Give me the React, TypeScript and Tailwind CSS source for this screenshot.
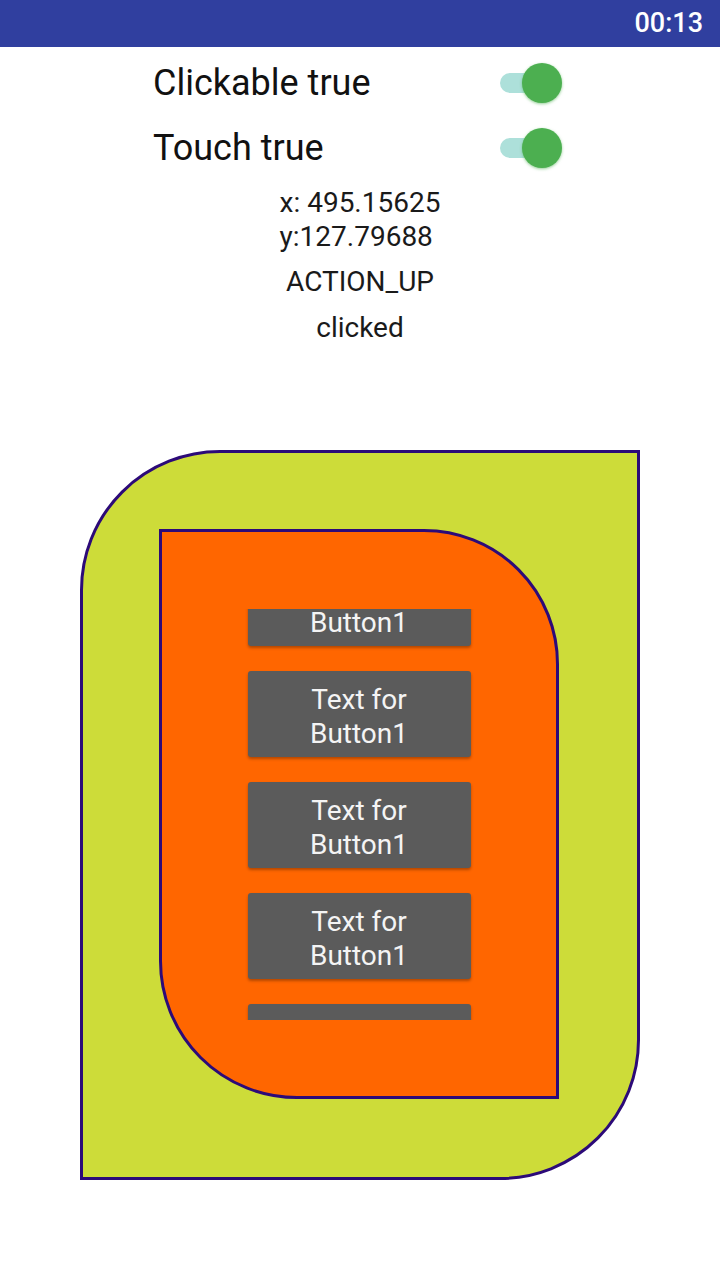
import React from "react";

function Toggle() {
  return (
    <div className="relative w-[62px] h-[40px]">
      <div className="absolute left-0 top-[10px] w-[56px] h-[20px] rounded-full bg-[#ade0da]" />
      <div className="absolute right-0 top-0 w-[40px] h-[40px] rounded-full bg-[#4caf50] shadow-[0_1px_3px_rgba(76,175,80,0.6)]" />
    </div>
  );
}

function Btn({ label }: { label: React.ReactNode }) {
  return (
    <div className="w-[223px] h-[86px] shrink-0 rounded-[3px] bg-[#5b5b5b] shadow-[0_2px_3px_rgba(0,0,0,0.3)] pt-[6px] flex items-center justify-center text-center text-[28px] leading-[34px] text-[#f4f4f4]">
      <div>{label}</div>
    </div>
  );
}

export default function App() {
  const btnText = (
    <>
      Text for
      <br />
      Button1
    </>
  );
  return (
    <div
      className="w-[720px] h-[1280px] bg-white overflow-hidden"
      style={{ fontFamily: "Roboto, 'Noto Sans', sans-serif" }}
    >
      <div className="h-[47px] bg-[#303f9f] flex items-center justify-end pr-[17px]">
        <span className="text-white text-[27px] font-medium leading-none">00:13</span>
      </div>

      <div className="ml-[153px] w-[409px] pt-[3px]">
        <div className="h-[65px] flex items-center justify-between">
          <span className="text-[36px] text-[#111] leading-none">Clickable true</span>
          <Toggle />
        </div>
        <div className="h-[65px] flex items-center justify-between">
          <span className="text-[36px] text-[#111] leading-none">Touch true</span>
          <Toggle />
        </div>
      </div>

      <div className="mt-[6px] flex flex-col items-center text-[28px] leading-[34px] text-[#1a1a1a]">
        <div className="text-left">
          x: 495.15625
          <br />
          y:127.79688
        </div>
        <div className="mt-[11px]">ACTION_UP</div>
        <div className="mt-[12px]">clicked</div>
      </div>

      <div className="ml-[80px] mt-[105px] w-[560px] h-[730px] border-[3px] border-[#2c0a78] bg-[#cddc39] rounded-tl-[140px] rounded-br-[140px] pt-[76px] pl-[76px]">
        <div className="w-[400px] h-[570px] border-[3px] border-[#2c0a78] bg-[#ff6600] rounded-tr-[135px] rounded-bl-[138px] pt-[77px] flex justify-center">
          <div className="w-[230px] h-[411px] overflow-hidden flex justify-center">
            <div className="-mt-[49px] flex flex-col gap-[25px] items-center">
              <Btn label={btnText} />
              <Btn label={btnText} />
              <Btn label={btnText} />
              <Btn label={btnText} />
              <Btn label={btnText} />
            </div>
          </div>
        </div>
      </div>
    </div>
  );
}
